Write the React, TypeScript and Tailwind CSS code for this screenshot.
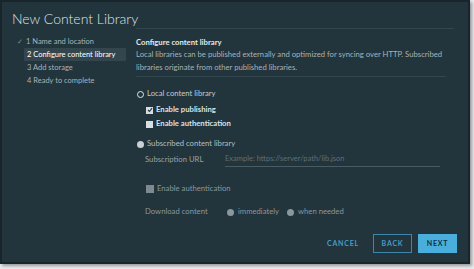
import React from 'react';

const steps = [
  { n: '1 Name and location', done: true },
  { n: '2 Configure content library', active: true },
  { n: '3 Add storage' },
  { n: '4 Ready to complete' },
];

const Radio = ({ filled, dim }: { filled?: boolean; dim?: boolean }) => (
  <span
    className={
      filled
        ? `inline-block w-[7px] h-[7px] rounded-full ${dim ? 'bg-[#8a979c]' : 'bg-[#c9d1d4]'}`
        : 'inline-block w-[7px] h-[7px] rounded-full border-[1.5px] border-[#e4e8ea] bg-[#22343c]'
    }
  />
);

const Check = ({ checked, dim }: { checked?: boolean; dim?: boolean }) => (
  <span
    className={`inline-flex items-center justify-center ${dim ? 'bg-[#7d8a8f] w-[8px] h-[8px]' : 'bg-[#d7dde0] w-[7px] h-[7px]'}`}
  >
    {checked && (
      <svg width="6" height="6" viewBox="0 0 6 6">
        <path d="M1 3 L2.5 4.5 L5 1.2" stroke="#22343c" strokeWidth="1.1" fill="none" />
      </svg>
    )}
  </span>
);

export default function App() {
  return (
    <div className="w-[474px] h-[269px] bg-[#e9ebec] font-['Lato',sans-serif]">
      <div className="w-[470px] h-[264px] bg-[#22343c] border-2 border-[#18252b] shadow-[2px_2px_3px_rgba(0,0,0,0.35)] flex flex-col">
        <div className="pl-[10px] pt-[9px] h-[26px] text-[14px] text-[#dfe4e6] font-light leading-[16px]">
          New Content Library
        </div>
        <div className="flex flex-1">
          {/* Steps */}
          <div className="w-[134px] pl-[12px] pt-[7px] flex flex-col">
            {steps.map(s => (
              <div
                key={s.n}
                className={`flex items-center h-[13px] text-[7.5px] ${
                  s.active
                    ? 'bg-[#33464e] text-white ml-[10px] pl-[3px] w-[102px] rounded-[1px]'
                    : 'text-[#a7b3b8] pl-[13px]'
                }`}
              >
                {s.done && <span className="-ml-[10px] mr-[3px] text-[#7d8c91] text-[7px]">✓</span>}
                {s.n}
              </div>
            ))}
          </div>

          {/* Content */}
          <div className="flex-1 pr-[22px] flex flex-col text-[7.7px] text-[#b3bec2]">
            <div className="border-t border-[#34464d] pt-[7px] mr-[-8px]" />
            <div className="text-[#e3e8ea] font-bold leading-[12px]">Configure content library</div>
            <div className="leading-[13px] text-[#a7b3b8]">
              Local libraries can be published externally and optimized for syncing over HTTP. Subscribed
              libraries originate from other published libraries.
            </div>
            <div className="border-t border-[#34464d] mt-[2px]" />

            <div className="pl-[1px] mt-[12px] flex items-center gap-[3px] h-[10px] text-[#c3ccd0]">
              <Radio />
              <span>Local content library</span>
            </div>
            <div className="pl-[10px] mt-[6px] flex items-center gap-[3px] h-[10px] text-[#dce2e4] font-bold">
              <Check checked />
              <span>Enable publishing</span>
            </div>
            <div className="pl-[10px] mt-[4px] flex items-center gap-[3px] h-[10px] text-[#dce2e4] font-bold">
              <Check />
              <span>Enable authentication</span>
            </div>
            <div className="pl-[1px] mt-[10px] flex items-center gap-[3px] h-[10px] text-[#b3bec2]">
              <Radio filled />
              <span>Subscribed content library</span>
            </div>
            <div className="pl-[9px] mt-[5px] flex items-center h-[12px]">
              <span className="w-[80px] text-[#95a3a8]">Subscription URL</span>
              <div className="flex-1 border-b border-[#4a5c63] text-[7.5px] text-[#5e7077] pb-[1px] mr-[6px]">
                Example: https://server/path/lib.json
              </div>
            </div>
            <div className="pl-[10px] mt-[18px] flex items-center gap-[3px] h-[10px] text-[#8a989d]">
              <Check dim />
              <span>Enable authentication</span>
            </div>
            <div className="pl-[9px] mt-[13px] flex items-center h-[10px] text-[#8a989d]">
              <span className="w-[82px]">Download content</span>
              <span className="flex items-center gap-[4px] w-[60px]">
                <Radio filled dim />
                immediately
              </span>
              <span className="flex items-center gap-[4px]">
                <Radio filled dim />
                when needed
              </span>
            </div>

            <div className="flex-1" />
            <div className="flex justify-end items-center gap-[6px] mb-[9px] mr-[-11px] text-[7px] font-bold tracking-[0.8px]">
              <button className="h-[19px] pl-[12px] pr-[8px] text-[#4a9cc4]">CANCEL</button>
              <button className="h-[19px] w-[39px] border border-[#3f86ab] text-[#4a9cc4]">BACK</button>
              <button className="h-[19px] w-[39px] bg-[#49aedb] text-[#11303d]">NEXT</button>
            </div>
          </div>
        </div>
      </div>
    </div>
  );
}
